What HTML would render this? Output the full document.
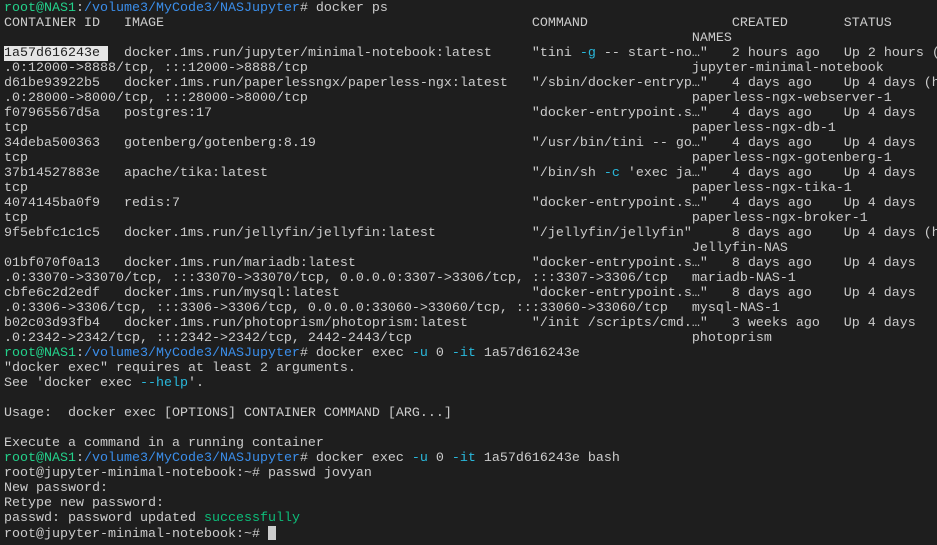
<!DOCTYPE html>
<html><head><meta charset="utf-8"><style>
html,body{margin:0;padding:0;background:#1e1e1e;width:937px;height:545px;overflow:hidden}
pre{margin:0;padding:1px 0 0 4px;font-family:"Liberation Mono",monospace;font-size:13.33px;line-height:15px;color:#cccccc;white-space:pre;overflow:hidden;width:933px}
.g{color:#23d18b}.b{color:#3b8eea}.c{color:#29b8db}.s{color:#0dbc79}
.h{background:#e5e5e5;color:#1e1e1e}
.cur{display:inline-block;width:8px;height:14px;background:#cccccc;vertical-align:-3px}
</style></head><body><pre><span class="g">root@NAS1</span>:<span class="b">/volume3/MyCode3/NASJupyter</span># docker ps
CONTAINER ID   IMAGE                                              COMMAND                  CREATED       STATUS
                                                                                      NAMES
<span class="h">1a57d616243e </span>  docker.1ms.run/jupyter/minimal-notebook:latest     "tini <span class="c">-g</span> -- start-no…"   2 hours ago   Up 2 hours (healthy)
.0:12000-&gt;8888/tcp, :::12000-&gt;8888/tcp                                                jupyter-minimal-notebook
d61be93922b5   docker.1ms.run/paperlessngx/paperless-ngx:latest   "/sbin/docker-entryp…"   4 days ago    Up 4 days (healthy)
.0:28000-&gt;8000/tcp, :::28000-&gt;8000/tcp                                                paperless-ngx-webserver-1
f07965567d5a   postgres:17                                        "docker-entrypoint.s…"   4 days ago    Up 4 days
tcp                                                                                   paperless-ngx-db-1
34deba500363   gotenberg/gotenberg:8.19                           "/usr/bin/tini -- go…"   4 days ago    Up 4 days
tcp                                                                                   paperless-ngx-gotenberg-1
37b14527883e   apache/tika:latest                                 "/bin/sh <span class="c">-c</span> 'exec ja…"   4 days ago    Up 4 days
tcp                                                                                   paperless-ngx-tika-1
4074145ba0f9   redis:7                                            "docker-entrypoint.s…"   4 days ago    Up 4 days
tcp                                                                                   paperless-ngx-broker-1
9f5ebfc1c1c5   docker.1ms.run/jellyfin/jellyfin:latest            "/jellyfin/jellyfin"     8 days ago    Up 4 days (healthy)
                                                                                      Jellyfin-NAS
01bf070f0a13   docker.1ms.run/mariadb:latest                      "docker-entrypoint.s…"   8 days ago    Up 4 days
.0:33070-&gt;33070/tcp, :::33070-&gt;33070/tcp, 0.0.0.0:3307-&gt;3306/tcp, :::3307-&gt;3306/tcp   mariadb-NAS-1
cbfe6c2d2edf   docker.1ms.run/mysql:latest                        "docker-entrypoint.s…"   8 days ago    Up 4 days
.0:3306-&gt;3306/tcp, :::3306-&gt;3306/tcp, 0.0.0.0:33060-&gt;33060/tcp, :::33060-&gt;33060/tcp   mysql-NAS-1
b02c03d93fb4   docker.1ms.run/photoprism/photoprism:latest        "/init /scripts/cmd.…"   3 weeks ago   Up 4 days
.0:2342-&gt;2342/tcp, :::2342-&gt;2342/tcp, 2442-2443/tcp                                   photoprism
<span class="g">root@NAS1</span>:<span class="b">/volume3/MyCode3/NASJupyter</span># docker exec <span class="c">-u</span> 0 <span class="c">-it</span> 1a57d616243e
"docker exec" requires at least 2 arguments.
See 'docker exec <span class="c">--help</span>'.

Usage:  docker exec [OPTIONS] CONTAINER COMMAND [ARG...]

Execute a command in a running container
<span class="g">root@NAS1</span>:<span class="b">/volume3/MyCode3/NASJupyter</span># docker exec <span class="c">-u</span> 0 <span class="c">-it</span> 1a57d616243e bash
root@jupyter-minimal-notebook:~# passwd jovyan
New password:
Retype new password:
passwd: password updated <span class="s">successfully</span>
root@jupyter-minimal-notebook:~# <span class="cur"></span></pre></body></html>
